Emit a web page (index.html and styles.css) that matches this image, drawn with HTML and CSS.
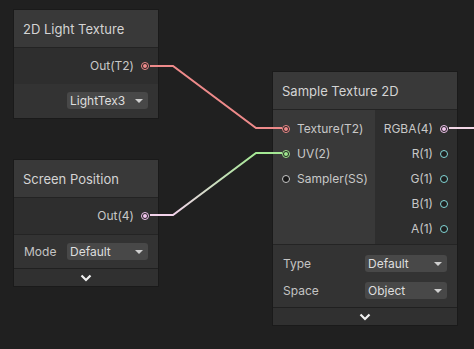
FILE: index.html
```html
<html>
    <head>
        <link rel="stylesheet" href="styles.css">
        <title>Shader Graph - Sample Texture 2D</title>
    </head>
    <body>
        <div class="graph">
            <svg class="wires" width="474" height="349" viewBox="0 0 474 349">
                <defs>
                    <linearGradient id="uvWire" gradientUnits="userSpaceOnUse" x1="173" y1="0" x2="256" y2="0">
                        <stop offset="0" stop-color="#f2d2ea" />
                        <stop offset="1" stop-color="#a4e894" />
                    </linearGradient>
                </defs>
                <path d="M150 66 H173 L256 128 H282" class="wire wire-tex" />
                <path d="M150 215 H173 L256 153 H282" class="wire" stroke="url(#uvWire)" />
                <path d="M449 128 H474" class="wire wire-out" />
            </svg>

            <!-- 2D Light Texture -->
            <div class="node node-light">
                <div class="node-header">2D Light Texture</div>
                <div class="node-ports">
                    <div class="outputs">
                        <div class="port-row">
                            <span>Out(T2)</span>
                            <span class="port port-tex connected"></span>
                        </div>
                    </div>
                </div>
                <div class="node-settings">
                    <div class="setting-row">
                        <div class="dropdown">LightTex3<span class="caret"></span></div>
                    </div>
                </div>
            </div>

            <!-- Screen Position -->
            <div class="node node-screen">
                <div class="node-header">Screen Position</div>
                <div class="node-ports">
                    <div class="outputs">
                        <div class="port-row">
                            <span>Out(4)</span>
                            <span class="port port-vec4 connected"></span>
                        </div>
                    </div>
                </div>
                <div class="node-settings">
                    <div class="setting-row">
                        <span class="setting-label">Mode</span>
                        <div class="dropdown">Default<span class="caret"></span></div>
                    </div>
                </div>
                <div class="node-expand">
                    <svg width="12" height="8" viewBox="0 0 12 8"><polyline points="1.5,1.5 6,6 10.5,1.5" /></svg>
                </div>
            </div>

            <!-- Sample Texture 2D -->
            <div class="node node-sample">
                <div class="node-header">Sample Texture 2D</div>
                <div class="node-ports">
                    <div class="inputs">
                        <div class="port-row">
                            <span class="port port-tex connected"></span>
                            <span>Texture(T2)</span>
                        </div>
                        <div class="port-row">
                            <span class="port port-vec2 connected"></span>
                            <span>UV(2)</span>
                        </div>
                        <div class="port-row">
                            <span class="port port-sampler"></span>
                            <span>Sampler(SS)</span>
                        </div>
                    </div>
                    <div class="outputs">
                        <div class="port-row">
                            <span>RGBA(4)</span>
                            <span class="port port-vec4 connected"></span>
                        </div>
                        <div class="port-row">
                            <span>R(1)</span>
                            <span class="port port-float"></span>
                        </div>
                        <div class="port-row">
                            <span>G(1)</span>
                            <span class="port port-float"></span>
                        </div>
                        <div class="port-row">
                            <span>B(1)</span>
                            <span class="port port-float"></span>
                        </div>
                        <div class="port-row">
                            <span>A(1)</span>
                            <span class="port port-float"></span>
                        </div>
                    </div>
                </div>
                <div class="node-settings">
                    <div class="setting-row">
                        <span class="setting-label">Type</span>
                        <div class="dropdown">Default<span class="caret"></span></div>
                    </div>
                    <div class="setting-row">
                        <span class="setting-label">Space</span>
                        <div class="dropdown">Object<span class="caret"></span></div>
                    </div>
                </div>
                <div class="node-expand">
                    <svg width="12" height="8" viewBox="0 0 12 8"><polyline points="1.5,1.5 6,6 10.5,1.5" /></svg>
                </div>
            </div>
        </div>
    </body>
</html>
```

FILE: styles.css
```css
body {
    margin: 0px;
    background: #202020;
    font-family: Inter, "Noto Sans", sans-serif;
    font-size: 12px;
    color: #c8c8c8;
}

.graph {
    position: relative;
    width: 474px;
    height: 349px;
    overflow: hidden;
    background: #202020;
}

/* nodes sit on a free canvas */
.node {
    position: absolute;
    background: #2e2e2e;
    box-shadow: 0 0 0 1px #1a1a1a;
}

.node-light {
    left: 14px;
    top: 10px;
    width: 144px;
}

.node-screen {
    left: 14px;
    top: 160px;
    width: 144px;
}

.node-sample {
    left: 273px;
    top: 72px;
    width: 184px;
}

.wires {
    position: absolute;
    left: 0;
    top: 0;
    z-index: 2;
    pointer-events: none;
}

.wire {
    fill: none;
    stroke-width: 2;
}
.wire-tex {
    stroke: #ee8a8a;
}
.wire-out {
    stroke: #f2d6e6;
}

.node-header {
    height: 37px;
    display: flex;
    align-items: center;
    padding-left: 9px;
    background: #393939;
    border-bottom: 1px solid #232323;
    font-size: 13px;
    color: #d4d4d4;
}

.node-ports {
    display: flex;
}

.inputs {
    flex: 1;
    background: #393939;
    padding: 6px 0 3px;
}

.outputs {
    flex: 1;
    background: #2e2e2e;
    padding: 5px 0 6px;
}

.node-sample .outputs {
    flex: 0 0 82px;
    padding: 6px 0 3px;
}

.port-row {
    height: 25px;
    display: flex;
    align-items: center;
    gap: 7px;
}

.inputs .port-row {
    padding-left: 9px;
}

.outputs .port-row {
    justify-content: flex-end;
    padding-right: 9px;
}

.port {
    width: 6px;
    height: 6px;
    border-radius: 50%;
    border: 1.5px solid currentColor;
    background: #1e1e1e;
    display: flex;
    align-items: center;
    justify-content: center;
    flex: none;
}

.port.connected::after {
    content: "";
    width: 4px;
    height: 4px;
    border-radius: 50%;
    background: currentColor;
}

.port-tex {
    color: #f08c8c;
}
.port-vec2 {
    color: #9fe68e;
}
.port-vec4 {
    color: #f2c6ee;
}
.port-float {
    color: #84d8d8;
}
.port-sampler {
    color: #c8c8c8;
    background: #181818;
}

.node-settings {
    background: #333333;
    border-top: 1px solid #242424;
    padding: 5px 10px 3px;
}

.node-light .node-settings {
    border-top: none;
    padding: 8px 10px 9px;
}

.node-screen .node-settings {
    padding: 8px 10px 8px;
}

.setting-row {
    height: 27px;
    display: flex;
    align-items: center;
    justify-content: space-between;
}

.node-light .setting-row,
.node-screen .setting-row {
    height: 17px;
}

.node-light .setting-row {
    justify-content: flex-end;
}

.setting-label {
    color: #c4c4c4;
}

.dropdown {
    width: 81px;
    height: 17px;
    box-sizing: border-box;
    display: flex;
    align-items: center;
    justify-content: space-between;
    padding: 0 5px 0 3px;
    background: #484848;
    border-radius: 3px;
    color: #dedede;
}

.node-sample .dropdown {
    width: 82px;
}

.caret {
    width: 0;
    height: 0;
    border-left: 4px solid transparent;
    border-right: 4px solid transparent;
    border-top: 4px solid #cfcfcf;
}

.node-expand {
    height: 17px;
    display: flex;
    align-items: center;
    justify-content: center;
    background: #303030;
    border-top: 1px solid #202020;
}

.node-expand polyline {
    fill: none;
    stroke: #f0f0f0;
    stroke-width: 2.2;
}
```
